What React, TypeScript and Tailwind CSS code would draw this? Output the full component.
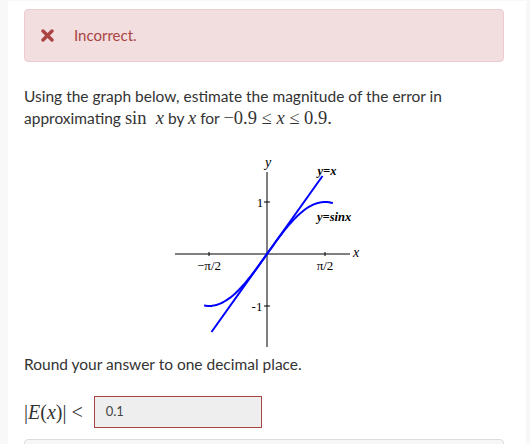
import React from 'react'

const blue = '#0000ff'

function sinPath() {
  const pts: string[] = []
  for (let i = 0; i <= 70; i++) {
    const t = -1.7 + (3.48 * i) / 70
    const x = 103 + 37 * t
    const y = 103 - 52 * Math.sin(t)
    pts.push(`${i === 0 ? 'M' : 'L'}${x.toFixed(1)} ${y.toFixed(1)}`)
  }
  return pts.join(' ')
}

function Graph() {
  const serif = { fontFamily: '"Liberation Serif", "DejaVu Serif", serif' }
  return (
    <svg width="200" height="196" viewBox="0 0 200 196" className="block" style={serif}>
      {/* axes */}
      <line x1="11" y1="103" x2="186" y2="103" stroke="#000" strokeWidth="1" />
      <line x1="103" y1="21" x2="103" y2="196" stroke="#000" strokeWidth="1" />
      {/* ticks */}
      <line x1="45" y1="101" x2="45" y2="105" stroke="#000" strokeWidth="1" />
      <line x1="161" y1="101" x2="161" y2="105" stroke="#000" strokeWidth="1" />
      <line x1="100" y1="51" x2="106" y2="51" stroke="#000" strokeWidth="1" />
      <line x1="100" y1="155" x2="106" y2="155" stroke="#000" strokeWidth="1" />
      {/* labels */}
      <text x="45" y="119" fontSize="13" textAnchor="middle">−π/2</text>
      <text x="161" y="119" fontSize="13" textAnchor="middle">π/2</text>
      <text x="96" y="56" fontSize="13" textAnchor="middle">1</text>
      <text x="93" y="160" fontSize="13" textAnchor="middle">-1</text>
      <text x="192" y="106" fontSize="14" fontStyle="italic" textAnchor="middle">x</text>
      <text x="104" y="16" fontSize="14" fontStyle="italic" textAnchor="middle">y</text>
      <text x="163" y="24" fontSize="12.5" fontStyle="italic" fontWeight="bold" textAnchor="middle">y=x</text>
      <text x="153" y="70" fontSize="12.5" fontStyle="italic" fontWeight="bold">y=sinx</text>
      {/* curves */}
      <line x1="47.5" y1="181" x2="158.5" y2="25" stroke={blue} strokeWidth="2" />
      <path d={sinPath()} fill="none" stroke={blue} strokeWidth="2" />
    </svg>
  )
}

export default function App() {
  const serif = { fontFamily: '"Liberation Serif", "Times New Roman", serif' }
  return (
    <div className="w-[530px] h-[444px] overflow-hidden bg-[#f8f8f8] pt-px pl-2 pr-1" style={{ fontFamily: 'Lato, "Noto Sans", sans-serif' }}>
      <div className="bg-white h-full px-4 pt-2 w-[518px]">
        <div className="w-[480px]">
          {/* Alert */}
          <div className="h-[53px] rounded border border-[#ebccd1] bg-[#f2dede] flex items-center pl-4 gap-[20px] text-[#a94442]">
            <svg width="13" height="13" viewBox="0 0 13 13">
              <path d="M2 2 L11 11 M11 2 L2 11" stroke="#a94442" strokeWidth="3.4" strokeLinecap="round" />
            </svg>
            <span className="text-[15px]">Incorrect.</span>
          </div>

          {/* Question */}
          <p className="mt-[23px] text-[15.5px] leading-[22px] text-[#333]">
            Using the graph below, estimate the magnitude of the error in approximating{' '}
            <span style={serif} className="text-[18.5px]">sin&nbsp; <i>x</i></span> by{' '}
            <i style={serif} className="text-[18.5px]">x</i> for{' '}
            <span style={serif} className="text-[18.5px]">−0.9 ≤ <i>x</i> ≤ 0.9.</span>
          </p>

          <div className="flex justify-center mt-[22px]">
            <Graph />
          </div>

          <p className="mt-[6px] text-[15.5px] leading-[22px] text-[#333]">Round your answer to one decimal place.</p>

          <div className="mt-[21px] flex items-center gap-[11px] text-[#333]">
            <span style={serif} className="text-[20px]">|<i>E</i>(<i>x</i>)| &lt;</span>
            <div className="w-[168px] h-[32px] border border-[#a94442] bg-[#eeeeee] flex items-center pl-[11px] text-[13px] text-[#444]">0.1</div>
          </div>

          <div className="mt-[11px] h-[20px] rounded-t border border-[#dddddd] bg-[#f7f7f7]" />
        </div>
      </div>
    </div>
  )
}
